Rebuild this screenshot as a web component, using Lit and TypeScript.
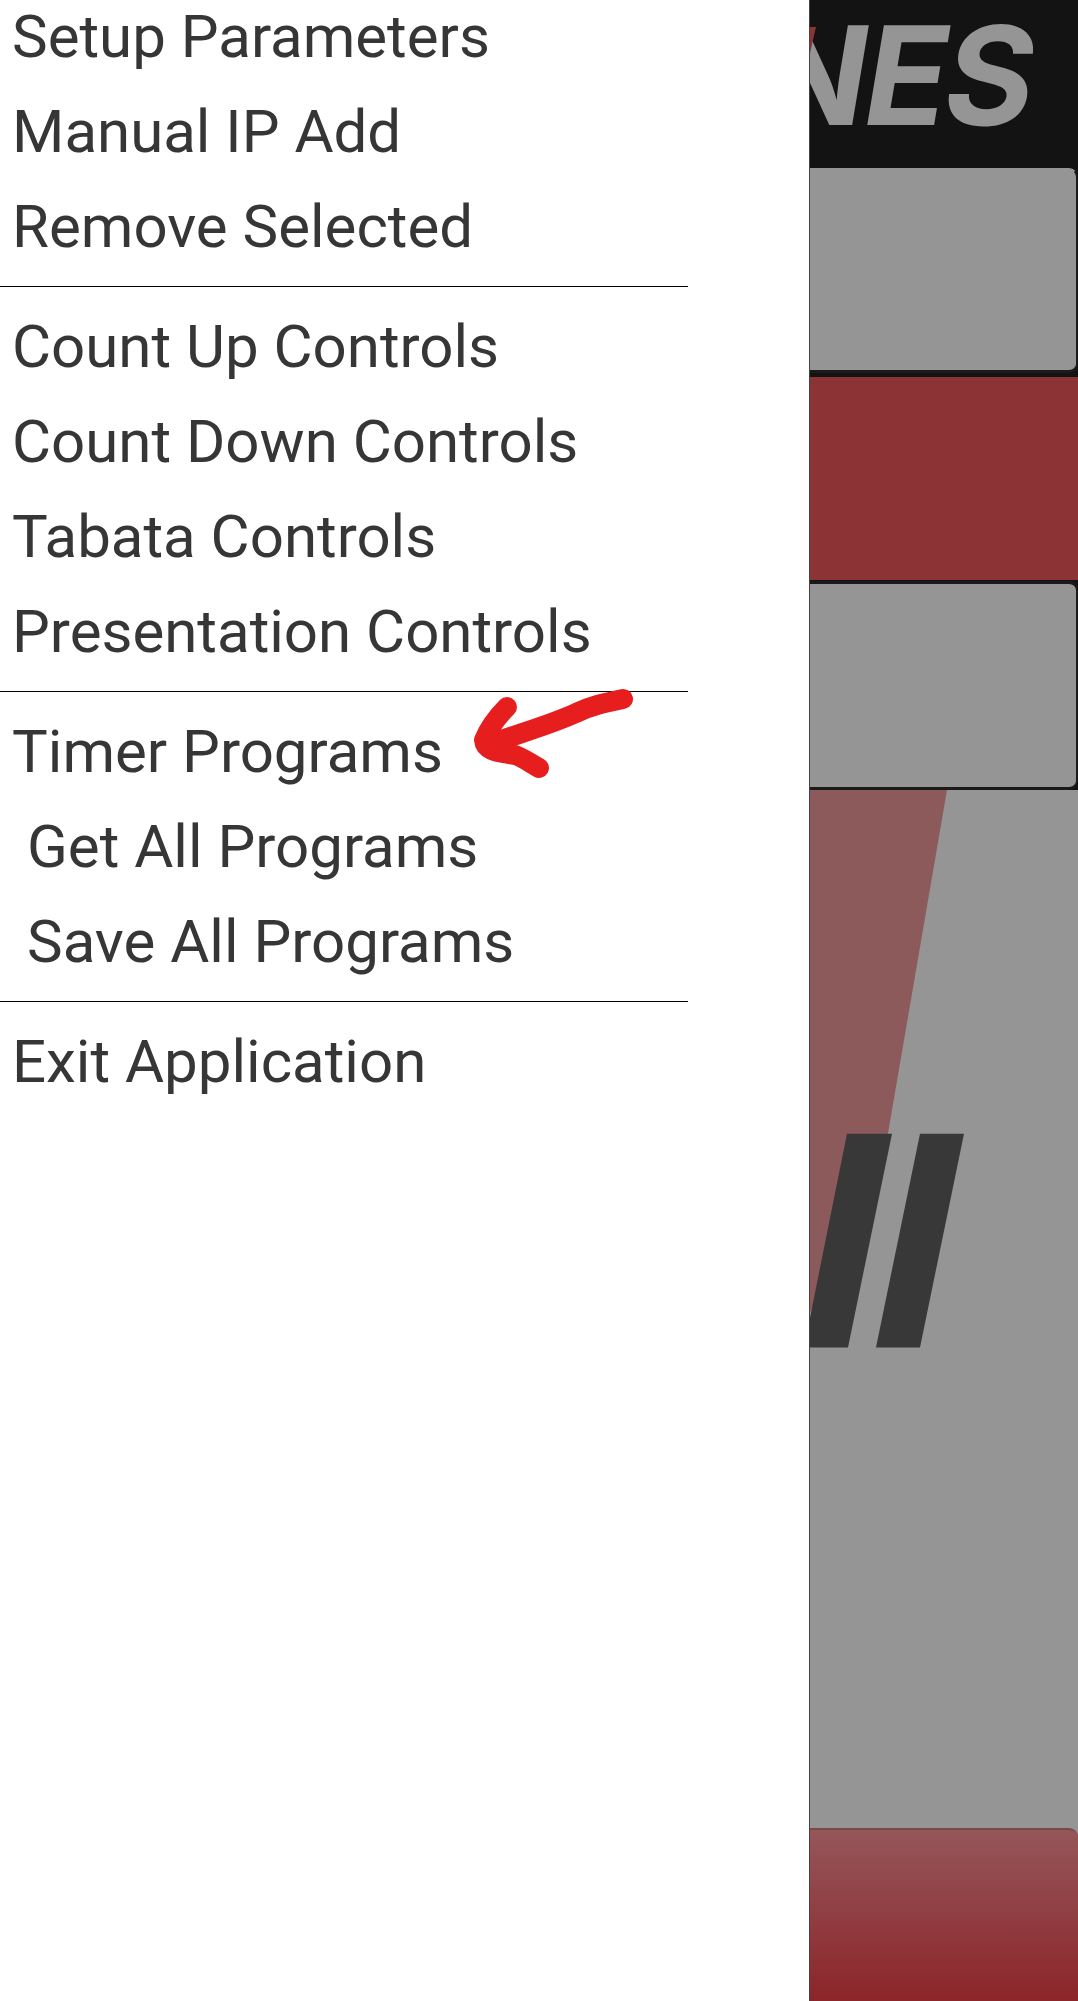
import { LitElement, html, css } from "lit";
import { customElement } from "lit/decorators.js";

type Item = { t: string; sub?: boolean } | "hr";
const ITEMS: Item[] = [
  { t: "Setup Parameters" }, { t: "Manual IP Add" }, { t: "Remove Selected" }, "hr",
  { t: "Count Up Controls" }, { t: "Count Down Controls" }, { t: "Tabata Controls" }, { t: "Presentation Controls" }, "hr",
  { t: "Timer Programs" }, { t: "Get All Programs", sub: true }, { t: "Save All Programs", sub: true }, "hr",
  { t: "Exit Application" },
];

@customElement("app-root")
export class AppRoot extends LitElement {
  static styles = css`
    :host { display: flex; width: 1078px; height: 2001px; overflow: hidden; position: relative; background: #fff;
      font-family: Roboto, "Liberation Sans", sans-serif; }
    .menu { width: 809px; flex: none; box-sizing: border-box; margin-top: -11px; color: #363636; }
    .item { height: 95px; line-height: 95px; font-size: 60px; padding-left: 12px; white-space: nowrap; }
    .item.sub { padding-left: 27px; }
    .hr { width: 688px; height: 1px; background: #000; margin: 12px 0 12px; }
    .panel { flex: 1; display: flex; flex-direction: column; background: #131313; border-left: 1px solid #444; overflow: hidden; min-width: 0; position: relative; }
    .logo { height: 168px; flex: none; display: flex; justify-content: flex-end; align-items: center; overflow: hidden; padding-right: 45px; box-sizing: border-box; position: relative; }
    .logo span { display: inline-block; transform: skewX(-9.5deg); font-family: Inter, Roboto, sans-serif; font-size: 137px; font-weight: 700; color: #959595; line-height: 1; letter-spacing: -3px; margin-top: -17px; }
    .tick { position: absolute; left: 0; top: 27px; width: 6px; height: 26px; background: #8c3335; clip-path: polygon(0 100%, 100% 0, 0 0); }
    .btn { flex: none; margin-left: -12px; box-sizing: border-box; border: 2px solid #1a1a1a; border-radius: 9px; }
    .gray { background: #959595; }
    .g1 { height: 205px; margin-bottom: 4px; border-top-color: #959595; border-bottom-width: 3px; }
    .red { background: #8c3335; height: 203px; margin-bottom: 1px; border: 0; border-radius: 0; }
    .g2 { height: 209px; border-top-width: 3px; border-bottom-width: 3px; }
    .art { flex: 1; min-height: 0; background: #959595; display: block; width: 100%; }
    .foot { flex: none; background: #959595; }
    .bottom { height: 173px; margin-left: -12px; box-sizing: border-box; border-top: 2px solid #7b4748; border-top-right-radius: 9px;
      background: linear-gradient(#95565a, #8b2529); }
    .arrow { position: absolute; left: 470px; top: 680px; width: 170px; height: 100px; pointer-events: none; }
  `;
  render() {
    return html`
      <div class="menu">
        ${ITEMS.map((i) => i === "hr" ? html`<div class="hr"></div>` : html`<div class="item ${i.sub ? "sub" : ""}">${i.t}</div>`)}
      </div>
      <div class="panel">
        <div class="logo"><span>NES</span><i class="tick"></i></div>
        <div class="btn gray g1"></div>
        <div class="btn red"></div>
        <div class="btn gray g2"></div>
        <svg class="art" viewBox="810 789 268 1039" preserveAspectRatio="none">
          <polygon points="810,789 947,789 885,1150 810,1312" fill="#8d5a5c"></polygon>
          <polygon points="847,1133 892,1133 848,1347 804,1347" fill="#383838"></polygon>
          <polygon points="920,1133 964,1133 920,1347 876,1347" fill="#383838"></polygon>
        </svg>
        <div class="foot"><div class="bottom"></div></div>
      </div>
      <svg class="arrow" viewBox="470 680 170 100">
        <g fill="none" stroke="#e61e1e" stroke-width="20" stroke-linecap="round" stroke-linejoin="round">
          <path d="M623 699 C 604 703 590 706 576 713 C 550 725 520 733 490 744"></path>
          <path d="M507 707 C 496 718 489 728 484 740 C 485 752 500 752 515 755 C 522 757 530 763 539 768"></path>
        </g>
      </svg>
    `;
  }
}
